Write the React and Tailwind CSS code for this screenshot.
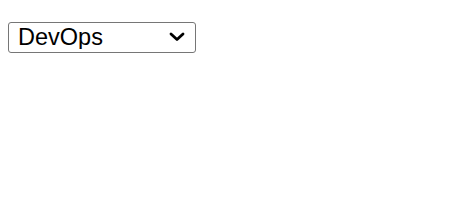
import React from "react";

export default function App() {
  return (
    <div className="w-[474px] h-[202px] bg-white pl-[8px] pt-[22px]">
      <div className="relative w-[188px] h-[31px]">
        <select
          defaultValue="DevOps"
          className="appearance-none w-full h-full border border-[#767676] rounded-[3px] bg-white pl-[9px] pr-[30px] text-[23.5px] leading-none text-black outline-none"
          style={{ fontFamily: '"Liberation Sans", Arial, sans-serif' }}
        >
          <option>DevOps</option>
          <option>Frontend</option>
          <option>Backend</option>
        </select>
        <svg
          className="absolute left-[160px] top-[9px] pointer-events-none"
          width="18"
          height="12"
          viewBox="0 0 18 12"
        >
          <path d="M3 3 L9 8.5 L15 3" fill="none" stroke="black" strokeWidth="2.8" strokeLinecap="round" strokeLinejoin="round" />
        </svg>
      </div>
    </div>
  );
}
